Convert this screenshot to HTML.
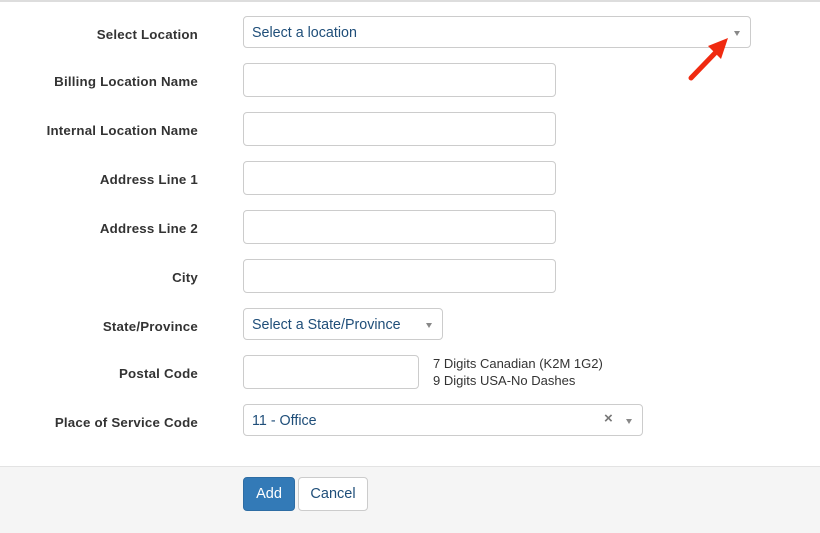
<!DOCTYPE html>
<html><head><style>
body{margin:0;width:820px;height:532px;background:#fff;font-family:"Liberation Sans",sans-serif;position:relative;overflow:hidden}
.top{position:absolute;left:0;top:0;width:820px;height:2px;background:#ddd}
.lbl{position:absolute;right:622px;font-weight:bold;font-size:13.3px;letter-spacing:0.2px;color:#333;text-align:right;white-space:nowrap}
.in{position:absolute;left:243px;box-sizing:border-box;border:1px solid #ccc;border-radius:4px;background:#fff}
.sel{color:#1f4e79;font-size:14.3px;padding-left:8px;line-height:32px}
.caret{position:absolute;width:0;height:0;border-left:3px solid transparent;border-right:3px solid transparent;border-top:5px solid #888}
.foot{position:absolute;left:0;top:466px;width:820px;height:66px;background:#f5f5f5;border-top:1px solid #e3e3e3}
.btn{position:absolute;top:477px;height:34px;box-sizing:border-box;border-radius:4px;font-size:14.5px;line-height:33px;text-align:center}
.hint{position:absolute;left:433px;top:355px;font-size:13px;color:#333;line-height:17px}
</style></head><body>
<div class="top"></div>
<div class="lbl" style="top:27px">Select Location</div>
<div class="in sel" style="top:16px;width:508px;height:32px">Select a location<span class="caret" style="left:490px;top:14px"></span></div>
<div class="lbl" style="top:74px">Billing Location Name</div>
<div class="in" style="top:63px;width:313px;height:34px"></div>
<div class="lbl" style="top:123px">Internal Location Name</div>
<div class="in" style="top:112px;width:313px;height:34px"></div>
<div class="lbl" style="top:172px">Address Line 1</div>
<div class="in" style="top:161px;width:313px;height:34px"></div>
<div class="lbl" style="top:221px">Address Line 2</div>
<div class="in" style="top:210px;width:313px;height:34px"></div>
<div class="lbl" style="top:270px">City</div>
<div class="in" style="top:259px;width:313px;height:34px"></div>
<div class="lbl" style="top:319px">State/Province</div>
<div class="in sel" style="top:308px;width:200px;height:32px">Select a State/Province<span class="caret" style="left:182px;top:14px"></span></div>
<div class="lbl" style="top:366px">Postal Code</div>
<div class="in" style="top:355px;width:176px;height:34px"></div>
<div class="hint">7 Digits Canadian (K2M 1G2)<br>9 Digits USA-No Dashes</div>
<div class="lbl" style="top:415px">Place of Service Code</div>
<div class="in sel" style="top:404px;width:400px;height:32px">11 - Office<span style="position:absolute;left:360px;top:-2px;color:#777;font-weight:bold;font-size:15px">×</span><span class="caret" style="left:382px;top:14px"></span></div>
<div class="foot"></div>
<div class="btn" style="left:243px;width:52px;background:#337ab7;border:1px solid #2e6da4;color:#fff">Add</div>
<div class="btn" style="left:298px;width:70px;background:#fff;border:1px solid #ccc;color:#1f4e79">Cancel</div>
<svg style="position:absolute;left:680px;top:28px" width="60" height="60">
<line x1="11" y1="50" x2="38" y2="22" stroke="#f02a10" stroke-width="5" stroke-linecap="round"/>
<polygon points="48,10 28,18 41,31" fill="#f02a10"/>
</svg>
</body></html>
